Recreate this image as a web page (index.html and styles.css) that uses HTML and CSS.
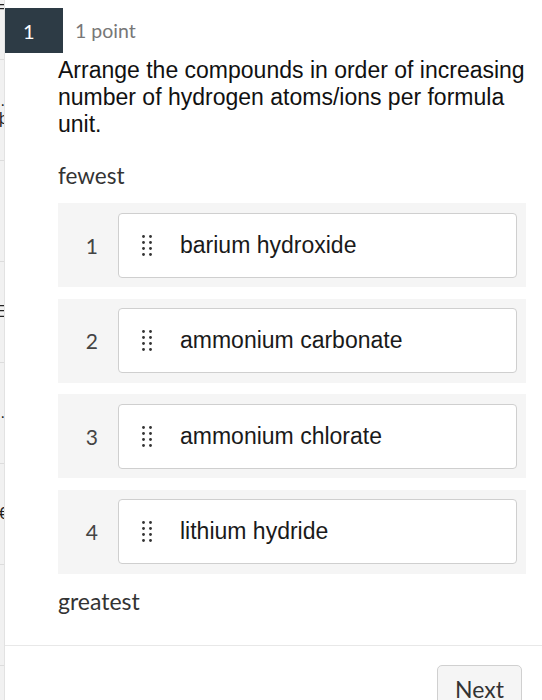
FILE: index.html
```html
<!DOCTYPE html>
<html lang="en">
<head>
    <meta charset="UTF-8">
    <meta name="viewport" content="width=device-width, initial-scale=1.0">
    <title>Question 1</title>
    <link rel="stylesheet" href="styles.css">
</head>
<body>
    <div class="page">
        <div class="sidebar">
            <div class="side-item first"><span>=</span></div>
            <div class="side-item"><span class="dot">.</span><span>þ</span></div>
            <div class="side-item"><span>i</span></div>
            <div class="side-item"><span>Ξ</span></div>
            <div class="side-item"><span class="dot">.</span></div>
            <div class="side-item"><span>€</span></div>
            <div class="side-item"></div>
        </div>

        <div class="main">
            <div class="question-header">
                <div class="question-number">1</div>
                <div class="points">1 point</div>
            </div>

            <div class="question-body">
                <p class="prompt">Arrange the compounds in order of increasing number of hydrogen atoms/ions per formula unit.</p>

                <div class="bound-label">fewest</div>

                <ol class="order-list">
                    <li class="order-row">
                        <span class="order-index">1</span>
                        <div class="order-item">
                            <svg class="grip" width="10" height="21" viewBox="0 0 10 21"><g fill="#333"><circle cx="1.5" cy="1.5" r="1.4"/><circle cx="8.5" cy="1.5" r="1.4"/><circle cx="1.5" cy="7.5" r="1.4"/><circle cx="8.5" cy="7.5" r="1.4"/><circle cx="1.5" cy="13.5" r="1.4"/><circle cx="8.5" cy="13.5" r="1.4"/><circle cx="1.5" cy="19.5" r="1.4"/><circle cx="8.5" cy="19.5" r="1.4"/></g></svg>
                            <span class="item-text">barium hydroxide</span>
                        </div>
                    </li>
                    <li class="order-row">
                        <span class="order-index">2</span>
                        <div class="order-item">
                            <svg class="grip" width="10" height="21" viewBox="0 0 10 21"><g fill="#333"><circle cx="1.5" cy="1.5" r="1.4"/><circle cx="8.5" cy="1.5" r="1.4"/><circle cx="1.5" cy="7.5" r="1.4"/><circle cx="8.5" cy="7.5" r="1.4"/><circle cx="1.5" cy="13.5" r="1.4"/><circle cx="8.5" cy="13.5" r="1.4"/><circle cx="1.5" cy="19.5" r="1.4"/><circle cx="8.5" cy="19.5" r="1.4"/></g></svg>
                            <span class="item-text">ammonium carbonate</span>
                        </div>
                    </li>
                    <li class="order-row">
                        <span class="order-index">3</span>
                        <div class="order-item">
                            <svg class="grip" width="10" height="21" viewBox="0 0 10 21"><g fill="#333"><circle cx="1.5" cy="1.5" r="1.4"/><circle cx="8.5" cy="1.5" r="1.4"/><circle cx="1.5" cy="7.5" r="1.4"/><circle cx="8.5" cy="7.5" r="1.4"/><circle cx="1.5" cy="13.5" r="1.4"/><circle cx="8.5" cy="13.5" r="1.4"/><circle cx="1.5" cy="19.5" r="1.4"/><circle cx="8.5" cy="19.5" r="1.4"/></g></svg>
                            <span class="item-text">ammonium chlorate</span>
                        </div>
                    </li>
                    <li class="order-row">
                        <span class="order-index">4</span>
                        <div class="order-item">
                            <svg class="grip" width="10" height="21" viewBox="0 0 10 21"><g fill="#333"><circle cx="1.5" cy="1.5" r="1.4"/><circle cx="8.5" cy="1.5" r="1.4"/><circle cx="1.5" cy="7.5" r="1.4"/><circle cx="8.5" cy="7.5" r="1.4"/><circle cx="1.5" cy="13.5" r="1.4"/><circle cx="8.5" cy="13.5" r="1.4"/><circle cx="1.5" cy="19.5" r="1.4"/><circle cx="8.5" cy="19.5" r="1.4"/></g></svg>
                            <span class="item-text">lithium hydride</span>
                        </div>
                    </li>
                </ol>

                <div class="bound-label">greatest</div>
            </div>

            <div class="footer">
                <button class="next-btn">Next</button>
            </div>
        </div>
    </div>
</body>
</html>
```

FILE: styles.css
```css
body {
    margin: 0;
    background-color: white;
    font-family: Lato, "Liberation Sans", sans-serif;
    color: #333;
    overflow: hidden;
}
.page {
    display: flex;
    height: 700px;
}
.sidebar {
    width: 4px;
    flex-shrink: 0;
    background-color: #f1f1f1;
    border-right: 1px solid #e2e2e2;
    overflow: hidden;
}
.side-item {
    height: 100px;
    border-bottom: 1px solid #dcdcdc;
    display: flex;
    flex-direction: column;
    align-items: flex-end;
    justify-content: center;
    gap: 4px;
    font-family: "Liberation Sans", sans-serif;
    font-size: 16px;
    color: #222;
    line-height: 14px;
}
.side-item span {
    margin-right: -4px;
}
.side-item.first {
    height: 59px;
    justify-content: flex-start;
}
.side-item .dot {
    margin-right: -1px;
}
.main {
    flex: 1;
    display: flex;
    flex-direction: column;
    min-width: 0;
}
.question-header {
    display: flex;
    align-items: center;
    margin-top: 8px;
    height: 45px;
}
.question-number {
    width: 58px;
    height: 45px;
    box-sizing: border-box;
    padding-left: 18px;
    background-color: #2d3b45;
    color: white;
    font-size: 20px;
    display: flex;
    align-items: center;
}
.points {
    margin-left: 12px;
    color: #777;
    font-size: 19.5px;
}
.question-body {
    margin-left: 53px;
    margin-right: 16px;
}
.prompt {
    margin: 4px 0 0;
    font-family: "Liberation Sans", Arial, sans-serif;
    font-size: 23px;
    line-height: 27px;
    color: #111;
}
.bound-label {
    font-size: 22.5px;
    line-height: 26px;
    color: #333;
}
.prompt + .bound-label {
    margin-top: 25px;
}
.order-list + .bound-label {
    font-size: 23px;
}
.order-list {
    list-style: none;
    margin: 14px 0;
    padding: 0;
}
.order-row {
    display: flex;
    align-items: center;
    height: 84px;
    padding-right: 9px;
    background-color: #f5f5f5;
    margin-bottom: 11.5px;
    box-sizing: border-box;
}
.order-row:last-child {
    margin-bottom: 0;
}
.order-index {
    width: 40px;
    text-align: right;
    padding-right: 20px;
    font-size: 21px;
    color: #444;
}
.order-item {
    flex: 1;
    height: 65px;
    background-color: white;
    border: 1px solid #cfcfcf;
    border-radius: 4px;
    box-sizing: border-box;
    display: flex;
    align-items: center;
    padding-left: 23px;
}
.grip {
    display: block;
}
.item-text {
    margin-left: 28px;
    font-family: "Liberation Sans", Arial, sans-serif;
    font-size: 23px;
    color: #1a1a1a;
}
.footer {
    margin-top: 31px;
    border-top: 1px solid #e8e8e8;
    padding-top: 19px;
    display: flex;
    justify-content: flex-end;
    padding-right: 20px;
}
.next-btn {
    width: 85px;
    height: 42px;
    background-color: #f5f5f5;
    border: 1px solid #d0d0d0;
    border-radius: 5px;
    font-family: Lato, sans-serif;
    font-size: 23px;
    color: #333;
    padding: 6px 0 0;
}
```
